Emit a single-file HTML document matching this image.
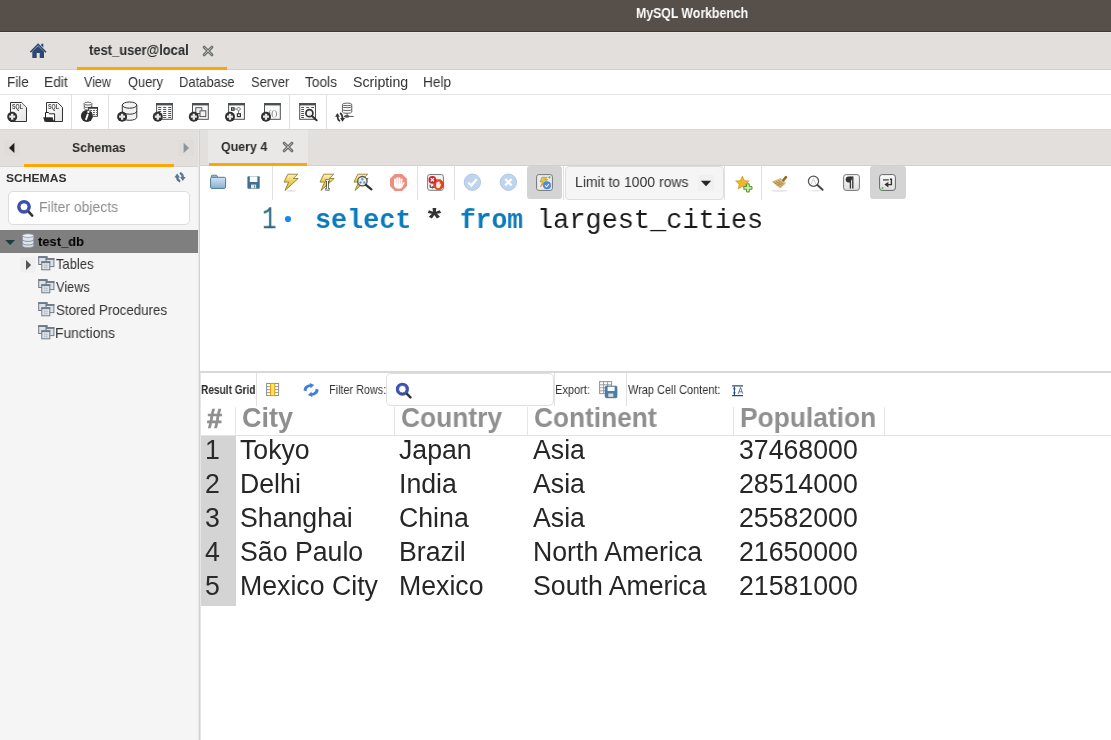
<!DOCTYPE html>
<html><head><meta charset="utf-8"><title>MySQL Workbench</title>
<style>
*{box-sizing:border-box;margin:0;padding:0}
html,body{width:1111px;height:740px;overflow:hidden;background:#fff;font-family:"Liberation Sans",sans-serif}
.a{position:absolute}
.tx{position:absolute;white-space:nowrap;display:block;will-change:transform}
.bm{display:inline-block;width:0;height:0}
.sep{position:absolute;width:1px;background:#e2e2e2}
svg{position:absolute;overflow:visible;will-change:transform}
</style></head><body>
<!-- title bar -->
<div class="a" style="left:0;top:0;width:1111px;height:31px;background:#574f4a"></div>
<div class="a" style="left:0;top:31px;width:1111px;height:1px;background:#3f3834"></div>
<div class="a" style="left:0;top:32px;width:1111px;height:1px;background:#ebe9e7"></div>
<!-- connection tabs -->
<div class="a" style="left:0;top:33px;width:1111px;height:36px;background:#e2dfdc"></div>
<div class="a" style="left:0;top:69px;width:1111px;height:1px;background:#d0cfcd"></div>
<div class="a" style="left:77px;top:67px;width:150px;height:3px;background:#ffa600"></div>
<!-- menu -->
<div class="a" style="left:0;top:94px;width:1111px;height:1px;background:#e3e3e3"></div>
<!-- main toolbar separators -->
<div class="sep" style="left:71px;top:95px;height:34px"></div>
<div class="sep" style="left:108px;top:95px;height:34px"></div>
<div class="sep" style="left:289px;top:95px;height:34px"></div>
<div class="sep" style="left:326px;top:95px;height:34px"></div>
<!-- secondary tab bar -->
<div class="a" style="left:0;top:129px;width:1111px;height:37px;background:#e2dfdc"></div>
<div class="a" style="left:0;top:129px;width:1111px;height:1px;background:#dad7d4"></div>
<!-- sidebar -->
<div class="a" style="left:0;top:167px;width:198px;height:573px;background:#f5f5f5"></div>
<div class="a" style="left:0;top:166px;width:198px;height:1px;background:#d6d4d1"></div>
<div class="a" style="left:198px;top:129px;width:1px;height:611px;background:#e6e6e6"></div>
<div class="a" style="left:199px;top:129px;width:1px;height:611px;background:#d2d2d2"></div>
<div class="a" style="left:200px;top:373px;width:1px;height:367px;background:#e6e6e6"></div>
<div class="a" style="left:24px;top:164px;width:150px;height:3px;background:#ffa600"></div>
<div class="a" style="left:4px;top:140px;width:16px;height:16px;background:#dfdcd9"></div>
<svg style="left:0;top:0" width="1" height="1"><path d="M9,148 L14.4,142.8 L14.4,153 Z" fill="#1e1e1e"/></svg>
<div class="a" style="left:178px;top:140px;width:16px;height:16px;background:#dfdcd9"></div>
<svg style="left:0;top:0" width="1" height="1"><path d="M189,148 L183.6,142.8 L183.6,153 Z" fill="#8a969c"/></svg>
<!-- query tab -->
<div class="a" style="left:200px;top:165px;width:911px;height:1px;background:#d3d1ce"></div>
<div class="a" style="left:208px;top:130px;width:100px;height:33px;background:#eae8e6"></div>
<div class="a" style="left:209px;top:162px;width:98px;height:1px;background:#e6e8f0"></div>
<div class="a" style="left:209px;top:163px;width:98px;height:3px;background:#ffa600"></div>
<!-- editor toolbar area -->
<div class="a" style="left:200px;top:166px;width:911px;height:205px;background:#fff"></div>
<!-- splitter -->
<div class="a" style="left:200px;top:371px;width:911px;height:2px;background:#d8d8d8"></div>
<!-- filter box sidebar -->
<div class="a" style="left:8px;top:191px;width:182px;height:34px;background:#fff;border:1px solid #dcdcdc;border-radius:5px"></div>
<!-- selected row -->
<div class="a" style="left:0;top:230px;width:198px;height:23px;background:#7f7f7f"></div>

<!-- editor toolbar separators -->
<div class="sep" style="left:272px;top:166px;height:34px"></div>
<div class="sep" style="left:417px;top:166px;height:34px"></div>
<div class="sep" style="left:454px;top:166px;height:34px"></div>
<div class="sep" style="left:563px;top:166px;height:34px"></div>
<div class="sep" style="left:724px;top:166px;height:34px"></div>
<div class="sep" style="left:761px;top:166px;height:34px"></div>
<!-- pressed toggles -->
<div class="a" style="left:527px;top:166px;width:35px;height:33px;background:#d4d4d4;border-radius:3px"></div>
<div class="a" style="left:870px;top:166px;width:36px;height:33px;background:#d4d4d4;border-radius:3px"></div>
<!-- limit dropdown -->
<div class="a" style="left:565px;top:166px;width:159px;height:34px;background:#f5f5f5;border:1px solid #dedede;border-radius:4px"></div>
<div class="a" style="left:698px;top:175px;width:16px;height:16px;background:#f0f0f0"></div>
<svg style="left:0;top:0" width="1" height="1"><path d="M700.8,180.8 L711.2,180.8 L706,186.2 Z" fill="#262626"/></svg>

<!-- results toolbar -->
<div class="sep" style="left:256px;top:373px;height:33px"></div>
<div class="a" style="left:386px;top:373px;width:168px;height:33px;background:#fff;border:1px solid #e0e0e0;border-radius:5px"></div>
<div class="sep" style="left:554px;top:373px;height:33px"></div>
<div class="sep" style="left:626px;top:373px;height:33px"></div>

<!-- grid -->
<div class="a" style="left:201px;top:435px;width:910px;height:1px;background:#e4e4e4"></div>
<div class="a" style="left:201px;top:436px;width:35px;height:170px;background:#d4d4d4"></div>
<div class="sep" style="left:235px;top:407px;height:28px;background:#e4e4e4"></div>
<div class="sep" style="left:394px;top:407px;height:28px;background:#e4e4e4"></div>
<div class="sep" style="left:527px;top:407px;height:28px;background:#e4e4e4"></div>
<div class="sep" style="left:733px;top:407px;height:28px;background:#e4e4e4"></div>
<div class="sep" style="left:884px;top:407px;height:28px;background:#e4e4e4"></div>

<svg style="left:0;top:0" width="1111" height="740" viewBox="0 0 1111 740">
<defs>
<linearGradient id="gDoc" x1="0" y1="0" x2="1" y2="1"><stop offset="0" stop-color="#ffffff"/><stop offset="1" stop-color="#e4e4e4"/></linearGradient>
<linearGradient id="gFold" x1="0" y1="0" x2="0" y2="1"><stop offset="0" stop-color="#cfe2f2"/><stop offset="1" stop-color="#8db1cf"/></linearGradient>
<linearGradient id="gBolt" x1="0" y1="0" x2="0" y2="1"><stop offset="0" stop-color="#fbf2c0"/><stop offset="0.45" stop-color="#e9cf55"/><stop offset="1" stop-color="#d9b83a"/></linearGradient>
<linearGradient id="gBox" x1="0" y1="0" x2="0" y2="1"><stop offset="0" stop-color="#fbfbfb"/><stop offset="1" stop-color="#dedede"/></linearGradient>
<g id="plus"><circle r="5" fill="#2e2e2e"/><path d="M-3,0H3M0,-3V3" stroke="#e6e6e6" stroke-width="2.3"/></g>
<g id="win"><rect x="0.5" y="0.5" width="15.8" height="15.8" fill="#fafafa" stroke="#4a4f52" stroke-width="1"/><rect x="0" y="0" width="16.8" height="2.4" fill="#4a4f52"/></g>
<g id="bolt"><path d="M3.8,0.3 H13.7 L9.3,4.6 H14.2 L1,16.6 L4.6,8.2 H0 Z" fill="url(#gBolt)" stroke="#8f6f1a" stroke-width="0.8" stroke-linejoin="round"/></g>
<g id="tw">
 <rect x="0.5" y="0.5" width="8.3" height="7.8" fill="#dde2e7" stroke="#6e7c8a"/><rect x="0" y="0" width="9.3" height="1.8" fill="#6e7c8a"/>
 <rect x="7.9" y="2.4" width="7.8" height="8" fill="#dde2e7" stroke="#6e7c8a"/><rect x="7.4" y="1.9" width="8.8" height="1.8" fill="#6e7c8a"/>
 <rect x="3.6" y="5.6" width="8" height="8" fill="#e3e7eb" stroke="#6e7c8a"/><rect x="3.1" y="5.1" width="9" height="1.8" fill="#6e7c8a"/>
 <path d="M5.5,9.2H10M5.5,11.2H10M6.5,7.5V13M8.5,7.5V13" stroke="#b3bcc5" stroke-width="0.6"/>
</g>
</defs>

<!-- ===== main toolbar ===== -->
<!-- 1 new sql -->
<path d="M10.5,102.5 H21.6 L26.5,107.4 V121.5 H10.5 Z" fill="url(#gDoc)" stroke="#333" stroke-width="1"/>
<path d="M21.6,102.8 L21.8,107.2 L26.2,107.5" fill="#e6e6e6" stroke="none"/>
<text x="12" y="109.3" font-family="'Liberation Sans', sans-serif" font-weight="700" font-size="7" fill="#4a4a4a" textLength="11" lengthAdjust="spacingAndGlyphs">SQL</text>
<use href="#plus" x="12.2" y="116.7"/>
<!-- 2 open sql -->
<path d="M46.5,102.5 H57.6 L62.5,107.4 V121.5 H46.5 Z" fill="url(#gDoc)" stroke="#333" stroke-width="1"/>
<text x="48" y="109.3" font-family="'Liberation Sans', sans-serif" font-weight="700" font-size="7" fill="#4a4a4a" textLength="11" lengthAdjust="spacingAndGlyphs">SQL</text>
<path d="M45.5,121 V112.5 H48.6 L49.6,113.8 H54.6 V121 Z" fill="#fff" stroke="#222" stroke-width="1"/>
<path d="M43.2,117.3 H52.6 L53.8,121.7 H44.6 Z" fill="#2b2b2b"/>
<!-- 3 server info -->
<path d="M84.2,103.6 V108.6 A3.8,1.5 0 0 0 91.8,108.6 V103.6" fill="#f4f4f4" stroke="#555" stroke-width="0.9"/>
<ellipse cx="88" cy="103.6" rx="3.8" ry="1.5" fill="#f8f8f8" stroke="#555" stroke-width="0.9"/>
<path d="M84.2,106.2 A3.8,1.5 0 0 0 91.8,106.2" fill="none" stroke="#555" stroke-width="0.8"/>
<rect x="88.7" y="107.6" width="8.8" height="8.7" fill="#f6f6f6" stroke="#333" stroke-width="0.9"/>
<rect x="88.2" y="107.1" width="9.8" height="1.6" fill="#333"/>
<path d="M90,110.5h2M93,110.5h2M96,110.5h1.5M90,112.5h2M93,112.5h2M96,112.5h1.5M93,114.5h2M96,114.5h1.5" stroke="#666" stroke-width="1"/>
<circle cx="86.9" cy="115.9" r="6" fill="#2e2e2e"/>
<circle cx="88.4" cy="112" r="1.15" fill="#fff"/>
<path d="M87.7,114.6 L86.1,119.2" stroke="#fff" stroke-width="1.9" stroke-linecap="round"/>
<!-- 4 new schema -->
<path d="M122.3,105.1 V117.2 A7.25,3.1 0 0 0 136.8,117.2 V105.1" fill="#f2f2f2" stroke="#333" stroke-width="1"/>
<ellipse cx="129.55" cy="105.1" rx="7.25" ry="3.1" fill="#f3f3f3" stroke="#333" stroke-width="1"/>
<path d="M122.3,111.1 A7.25,3.1 0 0 0 136.8,111.1" fill="none" stroke="#333" stroke-width="1"/>
<use href="#plus" x="122.1" y="116.7"/>
<!-- 5 new table -->
<use href="#win" x="156.1" y="103"/>
<path d="M158.2,107.5h3M163.2,107.5h3M168.2,107.5h3M158.2,109.5h3M163.2,109.5h3M168.2,109.5h3M158.2,111.5h3M163.2,111.5h3M168.2,111.5h3M158.2,113.5h3M163.2,113.5h3M168.2,113.5h3M163.2,115.5h3M168.2,115.5h3M163.2,117.5h3M168.2,117.5h3" stroke="#555" stroke-width="1"/>
<use href="#plus" x="157.8" y="116.7"/>
<!-- 6 new view -->
<use href="#win" x="192" y="103"/>
<rect x="195.8" y="107.7" width="6" height="5.8" fill="#f2f2f2" stroke="#555" stroke-width="1"/>
<rect x="200" y="110.8" width="5.8" height="5.8" fill="#f2f2f2" stroke="#555" stroke-width="1"/>
<use href="#plus" x="193.8" y="116.7"/>
<!-- 7 new proc -->
<use href="#win" x="228.1" y="103"/>
<rect x="231.6" y="107.8" width="2.4" height="2.4" fill="none" stroke="#333" stroke-width="1.2"/>
<path d="M238.6,107 L240.6,109 L238.6,111 L236.6,109 Z M234.1,109 H236.6 M238.6,111 V113.6" fill="none" stroke="#555" stroke-width="0.8"/>
<rect x="237.4" y="113.8" width="3" height="2.8" fill="none" stroke="#333" stroke-width="1.2"/>
<use href="#plus" x="230" y="116.7"/>
<!-- 8 new func -->
<use href="#win" x="264" y="103"/>
<text x="268.3" y="116.3" font-family="'Liberation Serif', serif" font-size="9" fill="#777" textLength="9" lengthAdjust="spacingAndGlyphs">f()</text>
<use href="#plus" x="266" y="116.7"/>
<!-- 9 inspector -->
<use href="#win" x="299.2" y="103"/>
<path d="M301.2,107.5h2.8M306.3,107.5h2.8M311.2,107.5h2.8M301.2,109.5h2.8M301.2,111.5h2.8M301.2,113.5h2.8M301.2,115.5h2.8M301.2,117.5h2.8" stroke="#555" stroke-width="1"/>
<circle cx="309.4" cy="113.2" r="3.5" fill="#f2f2f2" stroke="#333" stroke-width="1.7"/>
<path d="M312,116 L316.6,120.2" stroke="#333" stroke-width="2.1" stroke-linecap="round"/>
<!-- 10 reconnect -->
<path d="M342.4,104.5 V112 A4.7,1.3 0 0 0 351.8,112 V104.5" fill="#fbfbfb" stroke="#555" stroke-width="0.9"/>
<ellipse cx="347.1" cy="104.4" rx="4.7" ry="1.3" fill="#fbfbfb" stroke="#555" stroke-width="0.9"/>
<path d="M342.4,106.4 A4.7,1.3 0 0 0 351.8,106.4 M342.4,109.3 A4.7,1.3 0 0 0 351.8,109.3" fill="none" stroke="#555" stroke-width="0.9"/>
<path d="M347.1,113.3 V115.5" stroke="#555" stroke-width="1"/>
<ellipse cx="346.8" cy="116.4" rx="2.6" ry="1.35" fill="#555"/>
<path d="M344,116.4 H353.7" stroke="#555" stroke-width="1"/>
<path d="M335.1,116.8 L337.45,113 L339.8,116.8 Z" fill="#333"/>
<path d="M337.45,116.3 Q337.6,119.8 339.9,121.2" fill="none" stroke="#333" stroke-width="1.8"/>
<path d="M340.1,118.1 L345,118.1 L342.55,121.7 Z" fill="#333"/>
<path d="M340.1,113.1 Q342.4,114.6 342.55,118.4" fill="none" stroke="#333" stroke-width="1.8"/>

<!-- ===== sidebar ===== -->
<path d="M174.3,177.4 L177.2,173.4 L180,177.4 Z" fill="#5b7594"/>
<path d="M177.2,176.8 Q177.1,180.4 180.2,181.3" fill="none" stroke="#5b7594" stroke-width="2.3"/>
<path d="M185.7,176.9 L182.8,180.9 L180,176.9 Z" fill="#5b7594"/>
<path d="M182.8,177.5 Q182.9,173.9 179.8,173" fill="none" stroke="#5b7594" stroke-width="2.3"/>
<circle cx="24" cy="206.8" r="5.5" fill="#fff" stroke="#3a50b8" stroke-width="2.8"/>
<circle cx="24" cy="206.8" r="4" fill="none" stroke="#1f2c6a" stroke-width="0.8"/>
<path d="M29,212.2 L32.2,215.6" stroke="#333" stroke-width="2.6" stroke-linecap="round"/>
<path d="M5.3,239.9 H15 L10.15,244.9 Z" fill="#1d3c3c"/>
<path d="M22.5,235.6 V245.8 A5.6,1.8 0 0 0 33.7,245.8 V235.6" fill="#dfe4ea" stroke="#8a96a3" stroke-width="0.8"/>
<ellipse cx="28.1" cy="235.6" rx="5.6" ry="1.8" fill="#eef1f4" stroke="#8a96a3" stroke-width="0.8"/>
<path d="M22.5,239.6 A5.6,1.8 0 0 0 33.7,239.6 M22.5,243.2 A5.6,1.8 0 0 0 33.7,243.2" fill="none" stroke="#7d8a97" stroke-width="0.9"/>
<rect x="20.3" y="256.8" width="15.3" height="15.7" fill="#efefef"/>
<path d="M26,260 L31.1,265 L26,269.9 Z" fill="#555"/>
<use href="#tw" x="38.2" y="256.2"/>
<use href="#tw" x="38.2" y="279.2"/>
<use href="#tw" x="38.2" y="302.2"/>
<use href="#tw" x="38.2" y="325.2"/>

<!-- ===== editor toolbar ===== -->
<path d="M211.3,177.6 V176.1 Q211.3,175.2 212.2,175.2 H216.2 Q217,175.2 217.3,176.1 L217.6,177.4" fill="#9ec0da" stroke="#4d7a9b" stroke-width="0.9"/>
<rect x="210.6" y="177.3" width="15" height="11.1" rx="1.3" fill="url(#gFold)" stroke="#4d7a9b" stroke-width="1"/>
<rect x="247.4" y="176.2" width="12.3" height="12.5" rx="1" fill="#3f6f92"/>
<rect x="249.8" y="176.4" width="7.6" height="5.6" fill="#fff"/>
<rect x="251" y="184.6" width="5.2" height="3.7" fill="#e6e6e6"/>
<path d="M254.6,185.4V187.6" stroke="#555" stroke-width="0.8"/>
<use href="#bolt" x="284" y="173.9"/>
<ellipse cx="291" cy="190.8" rx="5" ry="0.9" fill="#e2e2e2"/>
<use href="#bolt" x="320" y="173.9"/>
<path d="M325.4,180.6 H329.6 M327.5,180.6 V189.2 M325.4,189.2 H329.6" stroke="#333" stroke-width="2.4"/>
<path d="M325.8,180.6 H329.2 M327.5,180.6 V189.2 M325.8,189.2 H329.2" stroke="#fff" stroke-width="1"/>
<use href="#bolt" x="354" y="173.9"/>
<circle cx="362.4" cy="181.2" r="4.7" fill="#eef0e6" stroke="#555" stroke-width="1.3"/>
<circle cx="362.3" cy="179.3" r="1.2" fill="#6a9ad8"/><circle cx="360.6" cy="182.5" r="1.2" fill="#6a9ad8"/><circle cx="364.3" cy="182.5" r="1.2" fill="#6a9ad8"/>
<path d="M365.9,184.8 L371.4,189.3" stroke="#333" stroke-width="2.3" stroke-linecap="round"/>
<path d="M394.9,173.9 H402.1 L407,178.8 V186 L402.1,190.9 H394.9 L390,186 V178.8 Z" fill="#ef8d80"/>
<g fill="#fff"><rect x="394" y="178.6" width="1.9" height="6.5" rx="0.9"/><rect x="396.2" y="177.2" width="1.9" height="7.5" rx="0.9"/><rect x="398.4" y="177.2" width="1.9" height="7.5" rx="0.9"/><rect x="400.6" y="178.4" width="1.8" height="6.5" rx="0.9"/>
<path d="M394,183.5 H402.4 V184.6 L403.5,182.3 Q404.6,181.4 404.6,182.8 L402.3,187.2 Q401.2,188.8 398.6,188.8 Q395.2,188.8 394.3,186.6 Z"/></g>
<rect x="427.6" y="174.5" width="15.8" height="15.8" rx="2.2" fill="#f2f2f2" stroke="#7c7c7c" stroke-width="1"/>
<path d="M436.57,179.7 L440.63,179.7 L443.5,182.57 L443.5,186.63 L440.63,189.5 L436.57,189.5 L433.7,186.63 L433.7,182.57 Z" fill="#e5461e" stroke="#c23a14" stroke-width="0.6"/>
<circle cx="432.4" cy="179.8" r="3.9" fill="#d1232b"/>
<path d="M430.8,178.2 L434,181.4 M434,178.2 L430.8,181.4" stroke="#fff" stroke-width="1.3"/>
<path d="M436.4,187.3 Q436,184.6 436.4,182.6 Q437,182 437.5,182.6 V181.8 Q438.1,181.2 438.6,181.8 Q439.2,181.2 439.7,181.8 V184.8 L440.6,183.6 Q441.3,183.4 441.1,184.2 L439.9,187.5 Q439.2,188.3 437.9,188.3 Q436.7,188.2 436.4,187.3 Z" fill="#fff" opacity="0.9"/>
<path d="M430.2,184.6 V187.3 H433.5 M432.6,186.2 L433.7,187.3 L432.6,188.4" fill="none" stroke="#333" stroke-width="1"/>
<circle cx="472.4" cy="182.2" r="8.2" fill="#bed4ef" stroke="#a8bfdc" stroke-width="0.8"/>
<path d="M468.3,182.6 L471.3,185.6 L476.7,179.3" fill="none" stroke="#fff" stroke-width="2.3"/>
<circle cx="508.4" cy="182.2" r="8.2" fill="#bed4ef" stroke="#a8bfdc" stroke-width="0.8"/>
<path d="M505.2,179 L511.6,185.4 M511.6,179 L505.2,185.4" stroke="#fff" stroke-width="2.3"/>
<rect x="536.6" y="174.6" width="15.8" height="15.8" rx="2.2" fill="#ececec" stroke="#777" stroke-width="1"/>
<path d="M542,177.2 H547.3 L545,179.6 H547.6 L540.6,186.8 L542.6,181.8 H540 Z" fill="#e2c446" stroke="#9c7a1e" stroke-width="0.5"/>
<circle cx="547" cy="185.2" r="4" fill="#4a8ad8"/>
<path d="M545.1,185.3 L546.6,186.8 L549,184" fill="none" stroke="#fff" stroke-width="1.1"/>
<circle cx="549.5" cy="177.3" r="1.1" fill="#33cc33"/>
<path d="M742.4,176.1 L744.4,180.6 L749.2,181 L745.6,184.2 L746.6,188.9 L742.4,186.4 L738.2,188.9 L739.2,184.2 L735.6,181 L740.4,180.6 Z" fill="#f1b52b" stroke="#c98e12" stroke-width="0.6" stroke-linejoin="round"/>
<path d="M746.5,183.8 H749.3 V186.5 H752 V189.3 H749.3 V192 H746.5 V189.3 H743.8 V186.5 H746.5 Z" fill="#bff0a6" stroke="#4d8a20" stroke-width="0.9"/>
<ellipse cx="779.5" cy="190.7" rx="8" ry="1" fill="#e4e4e4"/>
<path d="M771.8,181.4 L779.6,178.6 L785.3,183.8 L780,188.6 Z" fill="#dcbc7c"/>
<path d="M773.6,181.9 L781.3,187.2 M775.9,181.1 L783,186 M778.1,180.2 L784.4,184.8 M774.5,183.6 L780.2,182.2 M776.6,185.4 L782.2,183.6" stroke="#a5844a" stroke-width="0.7"/>
<path d="M779.8,178.4 L785.5,183.6" stroke="#c2c0b8" stroke-width="1.8"/>
<path d="M783.4,180.2 L786,177.2" stroke="#9a6a1f" stroke-width="2.6" stroke-linecap="round"/>
<circle cx="813.5" cy="181.2" r="5.1" fill="#fff" stroke="#555" stroke-width="1.3"/>
<path d="M811.3,184 L813.5,178.3 L815.7,184" fill="none" stroke="#bdbdbd" stroke-width="0.7"/>
<path d="M817.4,185.1 L822.6,189.8" stroke="#444" stroke-width="2" stroke-linecap="round"/>
<ellipse cx="816" cy="190.8" rx="6" ry="0.8" fill="#e6e6e6"/>
<rect x="843.6" y="174.6" width="15.8" height="15.8" rx="2.5" fill="url(#gBox)" stroke="#777" stroke-width="1"/>
<path d="M853.3,176.6 H848.6 A2.9,2.9 0 0 0 848.6,182.4 H850.2 Z" fill="#333"/>
<path d="M850.4,176.8 V188.6 M852.8,176.8 V188.6" stroke="#333" stroke-width="1.3"/>
<rect x="879.6" y="174.6" width="15.8" height="15.8" rx="2.5" fill="url(#gBox)" stroke="#666" stroke-width="1"/>
<rect x="883" y="179.2" width="5.8" height="1.4" fill="#555"/>
<path d="M889.9,179.2 H891.4 V184.6 H887" fill="none" stroke="#333" stroke-width="1.4"/>
<path d="M884.4,184.6 L888.4,181.8 V187.4 Z" fill="#333"/>
<circle cx="882.6" cy="188" r="0.9" fill="#22cc22"/>

<!-- ===== results toolbar ===== -->
<rect x="266.6" y="383.5" width="12" height="12" fill="#fff" stroke="#8b8f94" stroke-width="1"/>
<path d="M266.6,386.6 H278.6 M266.6,389.6 H278.6 M266.6,392.6 H278.6" stroke="#8b8f94" stroke-width="0.9"/>
<rect x="270.6" y="383.4" width="4.2" height="12.2" fill="#ffe868" stroke="#e39b00" stroke-width="1"/>
<path d="M303.5,390.6 A7,6 0 0 1 310.3,384.2 L309.2,382.8 L314.2,385 L310.4,388.4 L310.6,386.8 A4.6,3.8 0 0 0 306.6,391.2 Z" fill="#3b80df"/>
<path d="M318.6,389.4 A7,6 0 0 1 311.8,395.8 L312.9,397.2 L307.9,395 L311.7,391.6 L311.5,393.2 A4.6,3.8 0 0 0 315.5,388.8 Z" fill="#3b80df"/>
<circle cx="402.4" cy="389.2" r="5.2" fill="#fff" stroke="#3a50b8" stroke-width="2.7"/>
<circle cx="402.4" cy="389.2" r="3.8" fill="none" stroke="#1f2c6a" stroke-width="0.7"/>
<path d="M407.2,394.2 L410.4,397.4" stroke="#333" stroke-width="2.5" stroke-linecap="round"/>
<rect x="599.6" y="381.6" width="12" height="12" fill="#fff" stroke="#8e949a" stroke-width="1"/>
<path d="M599.6,384.8 H611.6 M599.6,387.8 H611.6 M599.6,390.8 H611.6 M603.6,381.6 V393.6 M607.6,381.6 V393.6" stroke="#8e949a" stroke-width="0.9"/>
<rect x="605.3" y="386.2" width="11.6" height="11.5" rx="1" fill="#4a7ea4" stroke="#3a6a8c" stroke-width="0.8"/>
<rect x="607.6" y="386.8" width="7" height="4.2" fill="#fff"/>
<rect x="608.3" y="393.5" width="5" height="3.4" fill="#ddd"/>
<path d="M732.1,385.9 H743 M732.1,395.6 H743" stroke="#2c4a78" stroke-width="1.2"/>
<path d="M734.4,386.4 V395.2" stroke="#2c4a78" stroke-width="1.1"/>
<path d="M732.9,389.2 L734.4,387.3 L735.9,389.2 Z M732.9,392.6 L734.4,394.5 L735.9,392.6 Z" fill="#2c4a78"/>
<path d="M738.2,393.8 L740.5,387.4 L742.8,393.8 M739,391.8 H742" fill="none" stroke="#3a5a8a" stroke-width="0.8"/>

<!-- editor dot -->
<circle cx="288" cy="219" r="3.1" fill="#1b87f2"/>
<!-- home + close icons -->
<path d="M30.3,52.3 L38.1,44.3 L46,52.3" fill="none" stroke="#2d4772" stroke-width="1.6"/>
<path d="M41.3,45.6 V43.8 H43.3 V47.6 Z" fill="#2d4772"/>
<path d="M32.3,51.6 L38.1,45.9 L44,51.6 V58 H39.7 V53 H36.7 V58 H32.3 Z" fill="#2d4772"/>
<path d="M204.2,47.2 L211.9,54.8 M211.9,47.2 L204.2,54.8" stroke="#6b6e6b" stroke-width="3" stroke-linecap="round"/>
<path d="M204.6,47.6 L211.5,54.4 M211.5,47.6 L204.6,54.4" stroke="#c9cdc9" stroke-width="0.8" stroke-linecap="round"/>
<path d="M284.2,143.2 L291.9,150.8 M291.9,143.2 L284.2,150.8" stroke="#6b6e6b" stroke-width="3" stroke-linecap="round"/>
<path d="M284.6,143.6 L291.5,150.4 M291.5,143.6 L284.6,150.4" stroke="#c9cdc9" stroke-width="0.8" stroke-linecap="round"/>
</svg>


<span class="tx" id="t0" style="left:636.43px;top:3.61px;font:700 14.0px/18px 'Liberation Sans', sans-serif;color:#ffffff;transform-origin:0 14.00px;transform:scale(0.8773,1.0000);">MySQL Workbench<i class="bm"></i></span>
<span class="tx" id="t1" style="left:88.98px;top:40.71px;font:700 14.0px/18px 'Liberation Sans', sans-serif;color:#2b2b2b;transform-origin:0 14.00px;transform:scale(0.9242,1.0000);">test_user@local<i class="bm"></i></span>
<span class="tx" id="t2" style="left:6.58px;top:72.80px;font:400 14.2px/18px 'Liberation Sans', sans-serif;color:#333333;transform-origin:0 14.00px;transform:scale(0.9514,1.0000);">File<i class="bm"></i></span>
<span class="tx" id="t3" style="left:43.61px;top:72.80px;font:400 14.2px/18px 'Liberation Sans', sans-serif;color:#333333;transform-origin:0 14.00px;transform:scale(0.9711,1.0000);">Edit<i class="bm"></i></span>
<span class="tx" id="t4" style="left:84.20px;top:72.80px;font:400 14.2px/18px 'Liberation Sans', sans-serif;color:#333333;transform-origin:0 14.00px;transform:scale(0.8812,1.0000);">View<i class="bm"></i></span>
<span class="tx" id="t5" style="left:127.93px;top:72.80px;font:400 14.2px/18px 'Liberation Sans', sans-serif;color:#333333;transform-origin:0 14.00px;transform:scale(0.9063,1.0000);">Query<i class="bm"></i></span>
<span class="tx" id="t6" style="left:179.37px;top:72.80px;font:400 14.2px/18px 'Liberation Sans', sans-serif;color:#333333;transform-origin:0 14.00px;transform:scale(0.9165,1.0000);">Database<i class="bm"></i></span>
<span class="tx" id="t7" style="left:250.53px;top:72.80px;font:400 14.2px/18px 'Liberation Sans', sans-serif;color:#333333;transform-origin:0 14.00px;transform:scale(0.9154,1.0000);">Server<i class="bm"></i></span>
<span class="tx" id="t8" style="left:305.16px;top:72.80px;font:400 14.2px/18px 'Liberation Sans', sans-serif;color:#333333;transform-origin:0 14.00px;transform:scale(0.9684,1.0000);">Tools<i class="bm"></i></span>
<span class="tx" id="t9" style="left:352.58px;top:72.80px;font:400 14.2px/18px 'Liberation Sans', sans-serif;color:#333333;transform-origin:0 14.00px;transform:scale(0.9968,1.0000);">Scripting<i class="bm"></i></span>
<span class="tx" id="t10" style="left:422.62px;top:72.80px;font:400 14.2px/18px 'Liberation Sans', sans-serif;color:#333333;transform-origin:0 14.00px;transform:scale(0.9617,1.0000);">Help<i class="bm"></i></span>
<span class="tx" id="t11" style="left:71.86px;top:138.71px;font:700 13.4px/17px 'Liberation Sans', sans-serif;color:#2b2b2b;transform-origin:0 13.00px;transform:scale(0.9136,1.0000);">Schemas<i class="bm"></i></span>
<span class="tx" id="t12" style="left:6.33px;top:170.71px;font:700 11.0px/14px 'Liberation Sans', sans-serif;color:#333333;transform-origin:0 11.00px;transform:scale(1.0989,1.0000);">SCHEMAS<i class="bm"></i></span>
<span class="tx" id="t13" style="left:38.81px;top:197.61px;font:400 14.4px/18px 'Liberation Sans', sans-serif;color:#8c8c8c;transform-origin:0 14.00px;transform:scale(0.9682,1.0000);">Filter objects<i class="bm"></i></span>
<span class="tx" id="t14" style="left:37.93px;top:232.71px;font:700 13.6px/17px 'Liberation Sans', sans-serif;color:#000000;transform-origin:0 13.00px;transform:scale(0.9511,1.0000);">test_db<i class="bm"></i></span>
<span class="tx" id="t15" style="left:56.47px;top:255.00px;font:400 14.2px/18px 'Liberation Sans', sans-serif;color:#333333;transform-origin:0 14.00px;transform:scale(0.9152,1.0000);">Tables<i class="bm"></i></span>
<span class="tx" id="t16" style="left:56.30px;top:277.91px;font:400 14.2px/18px 'Liberation Sans', sans-serif;color:#333333;transform-origin:0 14.00px;transform:scale(0.8992,1.0000);">Views<i class="bm"></i></span>
<span class="tx" id="t17" style="left:55.91px;top:300.61px;font:400 14.2px/18px 'Liberation Sans', sans-serif;color:#333333;transform-origin:0 14.00px;transform:scale(0.9387,1.0000);">Stored Procedures<i class="bm"></i></span>
<span class="tx" id="t18" style="left:55.40px;top:323.61px;font:400 14.2px/18px 'Liberation Sans', sans-serif;color:#333333;transform-origin:0 14.00px;transform:scale(0.9740,1.0000);">Functions<i class="bm"></i></span>
<span class="tx" id="t19" style="left:220.94px;top:137.71px;font:700 13.4px/17px 'Liberation Sans', sans-serif;color:#2b2b2b;transform-origin:0 13.00px;transform:scale(0.9263,1.0000);">Query 4<i class="bm"></i></span>
<span class="tx" id="t20" style="left:574.89px;top:173.00px;font:400 14.2px/18px 'Liberation Sans', sans-serif;color:#333333;transform-origin:0 14.00px;transform:scale(0.9857,1.0000);">Limit to 1000 rows<i class="bm"></i></span>
<span class="tx" id="t21" style="left:261.90px;top:203.34px;font:400 28.5px/36px 'Liberation Mono', monospace;color:#2a6a80;transform-origin:0 25.50px;transform:scale(0.8509,1.0700);">1<i class="bm"></i></span>
<span class="tx" id="t22" style="left:315.47px;top:203.30px;font:700 28.5px/36px 'Liberation Mono', monospace;color:#0a7bbd;transform-origin:0 25.50px;transform:scale(0.9391,1.0000);">select<i class="bm"></i></span>
<span class="tx" id="t23" style="left:424.36px;top:203.30px;font:700 28.5px/36px 'Liberation Mono', monospace;color:#333333;transform-origin:0 25.50px;transform:scale(1.2135,1.0000);">*<i class="bm"></i></span>
<span class="tx" id="t24" style="left:459.80px;top:203.30px;font:700 28.5px/36px 'Liberation Mono', monospace;color:#0a7bbd;transform-origin:0 25.50px;transform:scale(0.9209,1.0000);">from<i class="bm"></i></span>
<span class="tx" id="t25" style="left:537.17px;top:203.30px;font:400 28.5px/36px 'Liberation Mono', monospace;color:#1a1a1a;transform-origin:0 25.50px;transform:scale(0.9448,1.0000);">largest_cities<i class="bm"></i></span>
<span class="tx" id="t26" style="left:201.07px;top:382.50px;font:700 12.0px/15px 'Liberation Sans', sans-serif;color:#2b2b2b;transform-origin:0 11.50px;transform:scale(0.8431,1.0000);">Result Grid<i class="bm"></i></span>
<span class="tx" id="t27" style="left:328.61px;top:383.00px;font:400 12.2px/15px 'Liberation Sans', sans-serif;color:#333333;transform-origin:0 11.50px;transform:scale(0.8898,1.0000);">Filter Rows:<i class="bm"></i></span>
<span class="tx" id="t28" style="left:554.89px;top:382.80px;font:400 12.2px/15px 'Liberation Sans', sans-serif;color:#333333;transform-origin:0 11.50px;transform:scale(0.9063,1.0000);">Export:<i class="bm"></i></span>
<span class="tx" id="t29" style="left:627.50px;top:382.80px;font:400 12.2px/15px 'Liberation Sans', sans-serif;color:#333333;transform-origin:0 11.50px;transform:scale(0.9006,1.0000);">Wrap Cell Content:<i class="bm"></i></span>
<span class="tx" id="t30" style="left:206.92px;top:401.71px;font:700 27.0px/34px 'Liberation Sans', sans-serif;color:#8f8f8f;transform-origin:0 26.00px;transform:scale(1.0105,1.0000);-webkit-text-stroke:0.7px #8f8f8f;">#<i class="bm"></i></span>
<span class="tx" id="t31" style="left:241.60px;top:401.00px;font:700 27.0px/34px 'Liberation Sans', sans-serif;color:#8f8f8f;">City<i class="bm"></i></span>
<span class="tx" id="t32" style="left:400.92px;top:401.00px;font:700 27.0px/34px 'Liberation Sans', sans-serif;color:#8f8f8f;transform-origin:0 26.00px;transform:scale(0.9761,1.0000);">Country<i class="bm"></i></span>
<span class="tx" id="t33" style="left:533.93px;top:401.00px;font:700 27.0px/34px 'Liberation Sans', sans-serif;color:#8f8f8f;transform-origin:0 26.00px;transform:scale(0.9725,1.0000);">Continent<i class="bm"></i></span>
<span class="tx" id="t34" style="left:739.69px;top:401.00px;font:700 27.0px/34px 'Liberation Sans', sans-serif;color:#8f8f8f;transform-origin:0 26.00px;transform:scale(0.9764,1.0000);">Population<i class="bm"></i></span>
<span class="tx" id="t35" style="left:204.60px;top:433.83px;font:400 26.7px/33px 'Liberation Sans', sans-serif;color:#2a2a2a;transform-origin:0 25.50px;transform:scale(1.0000,1.0500);">1<i class="bm"></i></span>
<span class="tx" id="t36" style="left:240.00px;top:433.83px;font:400 26.7px/33px 'Liberation Sans', sans-serif;color:#262626;transform-origin:0 25.50px;transform:scale(1.0000,1.0500);">Tokyo<i class="bm"></i></span>
<span class="tx" id="t37" style="left:399.00px;top:433.83px;font:400 26.7px/33px 'Liberation Sans', sans-serif;color:#262626;transform-origin:0 25.50px;transform:scale(1.0000,1.0500);">Japan<i class="bm"></i></span>
<span class="tx" id="t38" style="left:533.00px;top:433.83px;font:400 26.7px/33px 'Liberation Sans', sans-serif;color:#262626;transform-origin:0 25.50px;transform:scale(1.0000,1.0500);">Asia<i class="bm"></i></span>
<span class="tx" id="t39" style="left:738.50px;top:433.83px;font:400 26.7px/33px 'Liberation Sans', sans-serif;color:#262626;transform-origin:0 25.50px;transform:scale(1.0000,1.0500);">37468000<i class="bm"></i></span>
<span class="tx" id="t40" style="left:204.60px;top:467.83px;font:400 26.7px/33px 'Liberation Sans', sans-serif;color:#2a2a2a;transform-origin:0 25.50px;transform:scale(1.0000,1.0500);">2<i class="bm"></i></span>
<span class="tx" id="t41" style="left:240.00px;top:467.83px;font:400 26.7px/33px 'Liberation Sans', sans-serif;color:#262626;transform-origin:0 25.50px;transform:scale(1.0000,1.0500);">Delhi<i class="bm"></i></span>
<span class="tx" id="t42" style="left:399.00px;top:467.83px;font:400 26.7px/33px 'Liberation Sans', sans-serif;color:#262626;transform-origin:0 25.50px;transform:scale(1.0000,1.0500);">India<i class="bm"></i></span>
<span class="tx" id="t43" style="left:533.00px;top:467.83px;font:400 26.7px/33px 'Liberation Sans', sans-serif;color:#262626;transform-origin:0 25.50px;transform:scale(1.0000,1.0500);">Asia<i class="bm"></i></span>
<span class="tx" id="t44" style="left:738.50px;top:467.83px;font:400 26.7px/33px 'Liberation Sans', sans-serif;color:#262626;transform-origin:0 25.50px;transform:scale(1.0000,1.0500);">28514000<i class="bm"></i></span>
<span class="tx" id="t45" style="left:204.60px;top:501.83px;font:400 26.7px/33px 'Liberation Sans', sans-serif;color:#2a2a2a;transform-origin:0 25.50px;transform:scale(1.0000,1.0500);">3<i class="bm"></i></span>
<span class="tx" id="t46" style="left:240.00px;top:501.83px;font:400 26.7px/33px 'Liberation Sans', sans-serif;color:#262626;transform-origin:0 25.50px;transform:scale(1.0000,1.0500);">Shanghai<i class="bm"></i></span>
<span class="tx" id="t47" style="left:399.00px;top:501.83px;font:400 26.7px/33px 'Liberation Sans', sans-serif;color:#262626;transform-origin:0 25.50px;transform:scale(1.0000,1.0500);">China<i class="bm"></i></span>
<span class="tx" id="t48" style="left:533.00px;top:501.83px;font:400 26.7px/33px 'Liberation Sans', sans-serif;color:#262626;transform-origin:0 25.50px;transform:scale(1.0000,1.0500);">Asia<i class="bm"></i></span>
<span class="tx" id="t49" style="left:738.50px;top:501.83px;font:400 26.7px/33px 'Liberation Sans', sans-serif;color:#262626;transform-origin:0 25.50px;transform:scale(1.0000,1.0500);">25582000<i class="bm"></i></span>
<span class="tx" id="t50" style="left:204.60px;top:535.83px;font:400 26.7px/33px 'Liberation Sans', sans-serif;color:#2a2a2a;transform-origin:0 25.50px;transform:scale(1.0000,1.0500);">4<i class="bm"></i></span>
<span class="tx" id="t51" style="left:240.00px;top:535.83px;font:400 26.7px/33px 'Liberation Sans', sans-serif;color:#262626;transform-origin:0 25.50px;transform:scale(1.0000,1.0500);">São Paulo<i class="bm"></i></span>
<span class="tx" id="t52" style="left:399.00px;top:535.83px;font:400 26.7px/33px 'Liberation Sans', sans-serif;color:#262626;transform-origin:0 25.50px;transform:scale(1.0000,1.0500);">Brazil<i class="bm"></i></span>
<span class="tx" id="t53" style="left:533.00px;top:535.83px;font:400 26.7px/33px 'Liberation Sans', sans-serif;color:#262626;transform-origin:0 25.50px;transform:scale(1.0000,1.0500);">North America<i class="bm"></i></span>
<span class="tx" id="t54" style="left:738.50px;top:535.83px;font:400 26.7px/33px 'Liberation Sans', sans-serif;color:#262626;transform-origin:0 25.50px;transform:scale(1.0000,1.0500);">21650000<i class="bm"></i></span>
<span class="tx" id="t55" style="left:204.60px;top:569.83px;font:400 26.7px/33px 'Liberation Sans', sans-serif;color:#2a2a2a;transform-origin:0 25.50px;transform:scale(1.0000,1.0500);">5<i class="bm"></i></span>
<span class="tx" id="t56" style="left:240.00px;top:569.83px;font:400 26.7px/33px 'Liberation Sans', sans-serif;color:#262626;transform-origin:0 25.50px;transform:scale(1.0000,1.0500);">Mexico City<i class="bm"></i></span>
<span class="tx" id="t57" style="left:399.00px;top:569.83px;font:400 26.7px/33px 'Liberation Sans', sans-serif;color:#262626;transform-origin:0 25.50px;transform:scale(1.0000,1.0500);">Mexico<i class="bm"></i></span>
<span class="tx" id="t58" style="left:533.00px;top:569.83px;font:400 26.7px/33px 'Liberation Sans', sans-serif;color:#262626;transform-origin:0 25.50px;transform:scale(1.0000,1.0500);">South America<i class="bm"></i></span>
<span class="tx" id="t59" style="left:738.50px;top:569.83px;font:400 26.7px/33px 'Liberation Sans', sans-serif;color:#262626;transform-origin:0 25.50px;transform:scale(1.0000,1.0500);">21581000<i class="bm"></i></span>
</body></html>
